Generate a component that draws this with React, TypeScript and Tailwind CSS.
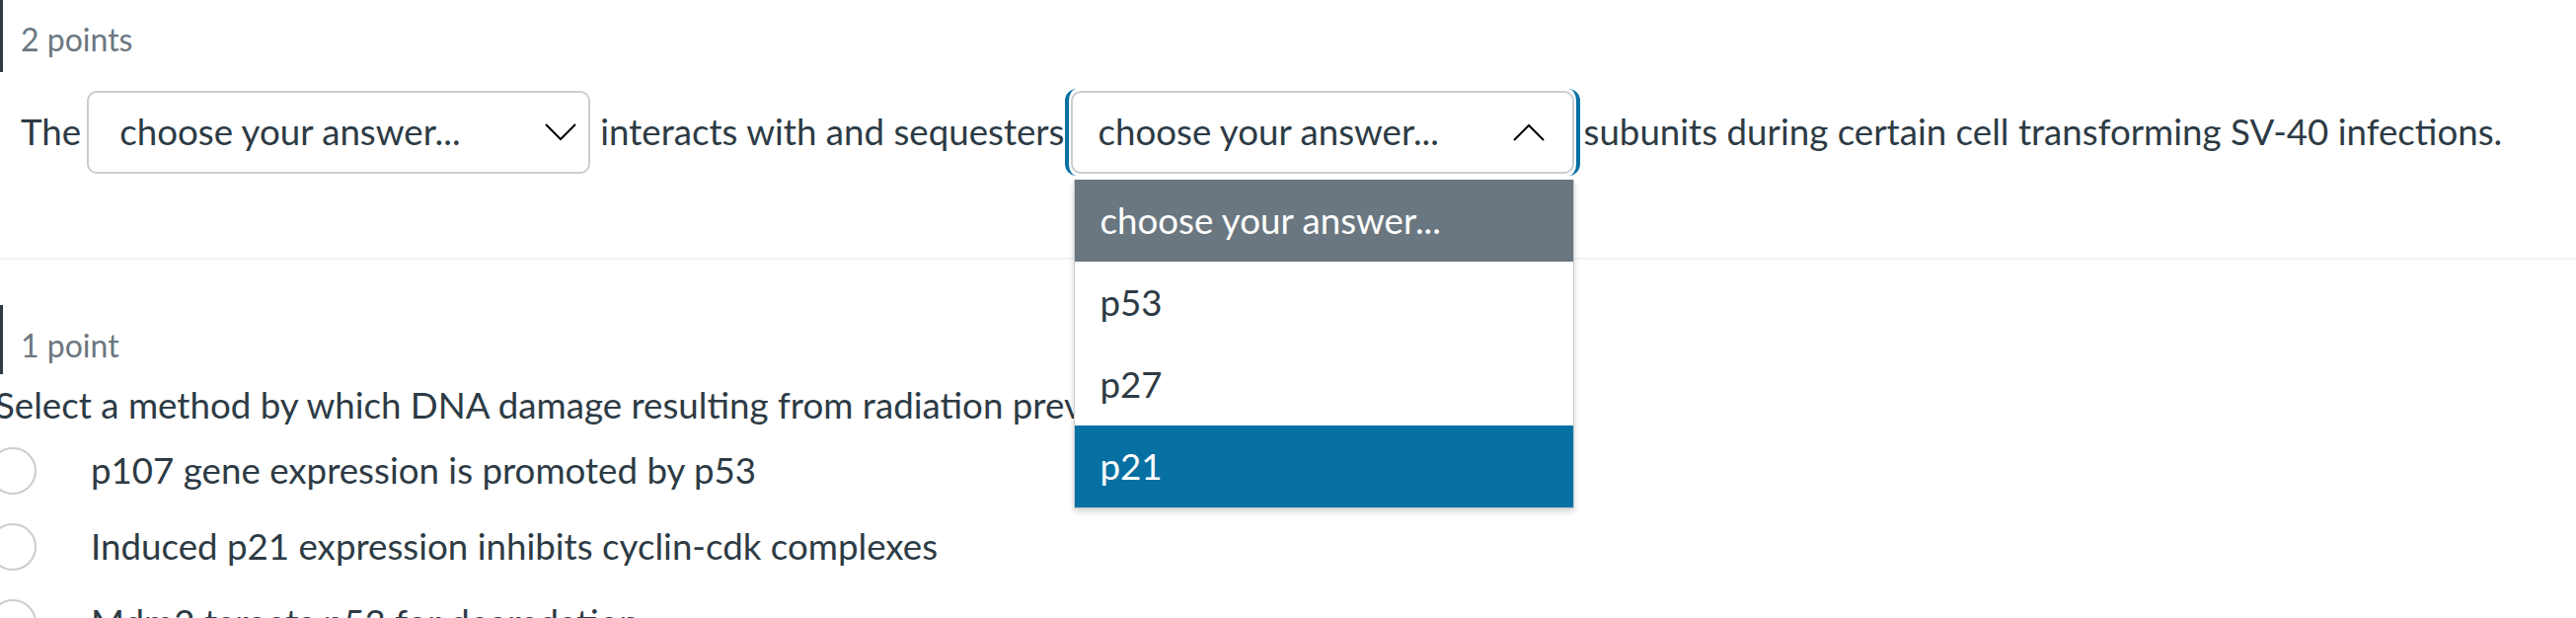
const options = ["choose your answer...", "p53", "p27", "p21"];

const answers = [
  "p107 gene expression is promoted by p53",
  "Induced p21 expression inhibits cyclin-cdk complexes",
  "Mdm2 targets p53 for degradation",
];

function Chevron({ up = false }: { up?: boolean }) {
  return (
    <svg width="32" height="18" viewBox="0 0 32 18" fill="none" className="shrink-0">
      <polyline
        points={up ? "1,17 16,2 31,17" : "1,1 16,16 31,1"}
        stroke="#000"
        strokeWidth="2"
        strokeLinejoin="miter"
      />
    </svg>
  );
}

function ClosedSelect() {
  return (
    <div className="flex h-[84px] w-[510px] shrink-0 items-center justify-between rounded-[10px] border-2 border-[#c7cdd1] bg-white pl-[31px] pr-[12px]">
      <span>choose your answer...</span>
      <Chevron />
    </div>
  );
}

function OpenSelect() {
  return (
    <div className="relative shrink-0">
      {/* focus ring */}
      <div className="pointer-events-none absolute -inset-x-[6px] -inset-y-[2px] rounded-[12px] border-x-[4px] border-[#0770a3]" />
      <div className="flex h-[84px] w-[510px] items-center justify-between rounded-[10px] border-2 border-[#c7cdd1] bg-white pl-[26px] pr-[28px]">
        <span>choose your answer...</span>
        <Chevron up />
      </div>
      <ul className="absolute left-[3px] top-[calc(100%+6px)] z-10 w-[507px] border-x border-b border-[#c7cdd1] bg-white shadow-[0_3px_6px_rgba(0,0,0,0.18)]">
        {options.map((opt, i) => (
          <li
            key={opt}
            className={`flex h-[83px] items-center pl-[26px] ${
              i === 0
                ? "bg-[#6b7780] text-white"
                : i === 3
                  ? "bg-[#0770a3] text-white"
                  : "text-[#2d3b45]"
            }`}
          >
            {opt}
          </li>
        ))}
      </ul>
    </div>
  );
}

export default function App() {
  return (
    <div className="relative h-[626px] w-[2610px] overflow-hidden bg-white font-['Lato',sans-serif] text-[36.7px] text-[#2d3b45]">
      <section className="border-b-2 border-[#f2f3f4] pb-[85px]">
        <div className="flex h-[73px] items-center border-l-[3px] border-[#2d3b45] pl-[18px] pt-[6px] text-[32px] text-[#6b7780]">
          2 points
        </div>
        <div className="mt-[19px] flex items-center whitespace-nowrap pl-[21px]">
          <span className="mr-[6px]">The</span>
          <ClosedSelect />
          <span className="ml-[10px] mr-[6px]">interacts with and sequesters</span>
          <OpenSelect />
          <span className="ml-[10px]">subunits during certain cell transforming SV-40 infections.</span>
        </div>
      </section>

      <section className="pt-[46px]">
        <div className="flex h-[70px] items-center border-l-[3px] border-[#2d3b45] pl-[18px] pt-[12px] text-[32px] text-[#6b7780]">
          1 point
        </div>
        <p className="-ml-[5px] mt-[10px] whitespace-nowrap leading-[42px]">
          Select a method by which DNA damage resulting from radiation prevents cell cycle arrest
        </p>
        <div className="mt-[22px] flex flex-col gap-[29px]">
          {answers.map((a) => (
            <label key={a} className="flex h-[48px] items-center">
              <span className="-ml-[11px] h-[48px] w-[48px] shrink-0 rounded-full border-2 border-[#c7cdd1] bg-white" />
              <span className="ml-[55px]">{a}</span>
            </label>
          ))}
        </div>
      </section>
    </div>
  );
}
